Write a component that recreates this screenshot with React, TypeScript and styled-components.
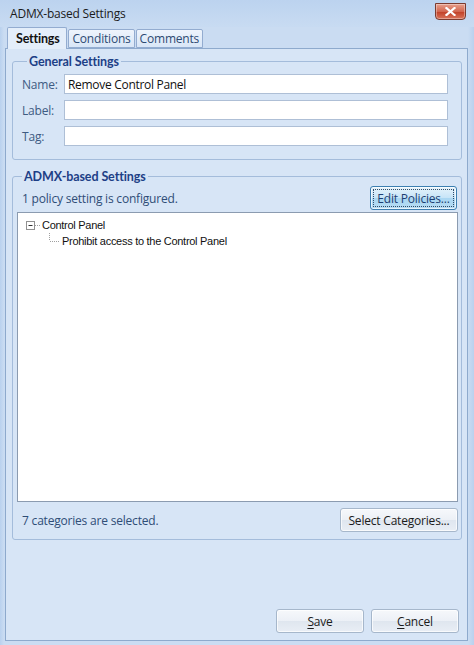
import styled, { createGlobalStyle } from 'styled-components';

const GlobalStyle = createGlobalStyle`
  html, body {
    margin: 0;
    padding: 0;
    background: #c7daf1;
  }
  body {
    font-family: "Open Sans", "Noto Sans", sans-serif;
    font-size: 12px;
  }
`;

const Window = styled.div`
  width: 474px;
  height: 645px;
  box-sizing: border-box;
  display: flex;
  flex-direction: column;
  background: linear-gradient(to right, #b9d1ee 0px, #cadcf2 4px, #cadcf2 468px, #b9d1ee 474px);
  overflow: hidden;
`;

const TitleBar = styled.div`
  height: 27px;
  flex: none;
  display: flex;
  align-items: center;
  justify-content: space-between;
  padding: 0 8px 0 10px;
  background: linear-gradient(to bottom, #bcd3ef, #c8dbf2);
`;

const Title = styled.span`
  color: #1b1b1b;
  font-size: 12px;
  letter-spacing: -0.2px;
  margin-top: -1px;
`;

const CloseButton = styled.div`
  width: 31px;
  height: 17px;
  margin-top: -4px;
  box-sizing: border-box;
  border: 1px solid #7b3b2f;
  border-radius: 0 0 4px 4px;
  background: linear-gradient(to bottom, #e7a08d 0%, #d2664f 50%, #c2432a 55%, #d9735a 100%);
  display: flex;
  align-items: center;
  justify-content: center;
  box-shadow: inset 0 0 0 1px rgba(255, 255, 255, 0.35);
`;

const TabStrip = styled.div`
  height: 21px;
  flex: none;
  display: flex;
  align-items: flex-end;
  padding-left: 7px;
  position: relative;
  z-index: 1;
`;

const Tab = styled.div<{ active?: boolean }>`
  box-sizing: border-box;
  height: ${(p) => (p.active ? '22px' : '19px')};
  margin-bottom: ${(p) => (p.active ? '-1px' : '0')};
  padding: 0 ${(p) => (p.active ? '7px 0 8px' : '3px')};
  margin-right: 1px;
  display: flex;
  align-items: center;
  border: 1px solid #93acd0;
  border-bottom: ${(p) => (p.active ? 'none' : '1px solid #93acd0')};
  border-radius: 2px 2px 0 0;
  background: ${(p) =>
    p.active ? '#e4eefa' : 'linear-gradient(to bottom, #eef4fc, #d8e6f7)'};
  color: ${(p) => (p.active ? '#111' : '#2d4a72')};
  font-family: ${(p) => (p.active ? 'Lato, "Open Sans", sans-serif' : 'inherit')};
  font-size: ${(p) => (p.active ? '12.5px' : '12px')};
  font-weight: ${(p) => (p.active ? 700 : 400)};
  letter-spacing: -0.2px;
`;

const TabPage = styled.div`
  flex: 1;
  margin: 0 6px 4px 5px;
  box-sizing: border-box;
  border: 1px solid #8eaacd;
  background: #d7e5f6;
  display: flex;
  flex-direction: column;
  padding: 5px 5px 7px 6px;
`;

const Group = styled.fieldset`
  margin: 0;
  padding: 2px 13px 10px 9px;
  border: 1px solid #a4bcdb;
  border-radius: 3px;
  min-width: 0;
`;

const Legend = styled.legend`
  padding: 0 2px;
  margin-left: 5px;
  color: #1d3f86;
  font-family: Lato, "Open Sans", sans-serif;
  font-weight: 700;
  font-size: 12.5px;
  letter-spacing: -0.1px;
`;

const FieldRow = styled.div`
  display: flex;
  align-items: center;
  height: 26px;
`;

const FieldLabel = styled.label`
  width: 42px;
  flex: none;
  color: #3e5b82;
  letter-spacing: -0.2px;
`;

const TextBox = styled.div`
  flex: 1;
  height: 20px;
  box-sizing: border-box;
  border: 1px solid #aebfd6;
  background: #fff;
  padding: 0 3px;
  display: flex;
  align-items: center;
  color: #111;
  letter-spacing: -0.3px;
`;

const AdmxGroup = styled(Group)`
  margin-top: 9px;
  padding: 0 3px 1px 4px;
`;

const StatusRow = styled.div<{ top?: boolean }>`
  display: flex;
  align-items: center;
  justify-content: space-between;
  padding-left: 5px;
  padding-right: ${(p) => (p.top ? '1px' : '0')};
  height: ${(p) => (p.top ? '28px' : '36px')};
`;

const StatusText = styled.span`
  color: #2f4d76;
  letter-spacing: -0.2px;
`;

const Button = styled.button<{ focused?: boolean; w: number }>`
  width: ${(p) => p.w}px;
  height: 24px;
  box-sizing: border-box;
  font-family: inherit;
  font-size: 12px;
  letter-spacing: -0.2px;
  color: ${(p) => (p.focused ? '#1d3f72' : '#1b1b1b')};
  border: 1px solid ${(p) => (p.focused ? '#3c7fb1' : '#a6b7cb')};
  border-radius: 3px;
  background: ${(p) =>
    p.focused
      ? 'linear-gradient(to bottom, #e6f3fb 0%, #c6e4f7 50%, #a9d6f2 51%, #b7dcf3 100%)'
      : 'linear-gradient(to bottom, #f6f8fb 0%, #ecf0f6 50%, #dfe6ef 51%, #e9eef5 100%)'};
  box-shadow: inset 0 0 0 1px rgba(255, 255, 255, 0.7);
  padding: 0;
  position: relative;
  display: flex;
  align-items: center;
  justify-content: center;

  &::after {
    content: '';
    display: ${(p) => (p.focused ? 'block' : 'none')};
    position: absolute;
    inset: 2px;
    border: 1px dotted #304a68;
  }

  u {
    text-decoration: underline;
    text-underline-offset: 2px;
  }
`;

const TreeBox = styled.div`
  height: 290px;
  box-sizing: border-box;
  border: 1px solid #8b9bb0;
  background: #fff;
  padding: 4px 0 0 8px;
  font-family: "Liberation Sans", Arial, sans-serif;
  font-size: 11px;
  letter-spacing: -0.28px;
  color: #111;
`;

const TreeRow = styled.div<{ depth: number }>`
  display: flex;
  align-items: center;
  height: 16px;
  padding-left: ${(p) => p.depth * 23}px;
`;

const Connector = styled.svg`
  flex: none;
  display: block;
`;

const Spacer = styled.div`
  flex: 1;
`;

const Footer = styled.div`
  display: flex;
  justify-content: flex-end;
  gap: 7px;
  padding-right: 3px;
`;

function ExpanderNode({ label }: { label: string }) {
  return (
    <TreeRow depth={0}>
      <Connector width="16" height="16" viewBox="0 0 16 16">
        <rect x="0.5" y="4.5" width="8" height="8" fill="#fff" stroke="#919191" />
        <line x1="2.5" y1="8.5" x2="6.5" y2="8.5" stroke="#333" />
        <line x1="9" y1="8.5" x2="15" y2="8.5" stroke="#a0a0a0" strokeDasharray="1 1" />
      </Connector>
      <span>{label}</span>
    </TreeRow>
  );
}

function LeafNode({ label }: { label: string }) {
  return (
    <TreeRow depth={1}>
      <Connector width="13" height="16" viewBox="0 0 13 16">
        <line x1="0.5" y1="0" x2="0.5" y2="8" stroke="#a0a0a0" strokeDasharray="1 1" />
        <line x1="1" y1="8.5" x2="10" y2="8.5" stroke="#a0a0a0" strokeDasharray="1 1" />
      </Connector>
      <span>{label}</span>
    </TreeRow>
  );
}

export default function App() {
  return (
    <>
      <GlobalStyle />
      <Window>
        <TitleBar>
          <Title>ADMX-based Settings</Title>
          <CloseButton>
            <svg width="11" height="9" viewBox="0 0 11 9">
              <path d="M1.5 1 L9.5 8 M9.5 1 L1.5 8" stroke="#fff" strokeWidth="2.2" strokeLinecap="square" />
            </svg>
          </CloseButton>
        </TitleBar>
        <TabStrip>
          <Tab active>Settings</Tab>
          <Tab>Conditions</Tab>
          <Tab>Comments</Tab>
        </TabStrip>
        <TabPage>
          <Group>
            <Legend>General Settings</Legend>
            <FieldRow>
              <FieldLabel>Name:</FieldLabel>
              <TextBox>Remove Control Panel</TextBox>
            </FieldRow>
            <FieldRow>
              <FieldLabel>Label:</FieldLabel>
              <TextBox />
            </FieldRow>
            <FieldRow>
              <FieldLabel>Tag:</FieldLabel>
              <TextBox />
            </FieldRow>
          </Group>
          <AdmxGroup>
            <Legend>ADMX-based Settings</Legend>
            <StatusRow top>
              <StatusText>1 policy setting is configured.</StatusText>
              <Button focused w={87}>Edit Policies...</Button>
            </StatusRow>
            <TreeBox>
              <ExpanderNode label="Control Panel" />
              <LeafNode label="Prohibit access to the Control Panel" />
            </TreeBox>
            <StatusRow>
              <StatusText>7 categories are selected.</StatusText>
              <Button w={118}>Select Categories...</Button>
            </StatusRow>
          </AdmxGroup>
          <Spacer />
          <Footer>
            <Button w={88}>
              <u>S</u>ave
            </Button>
            <Button w={88}>
              <u>C</u>ancel
            </Button>
          </Footer>
        </TabPage>
      </Window>
    </>
  );
}
